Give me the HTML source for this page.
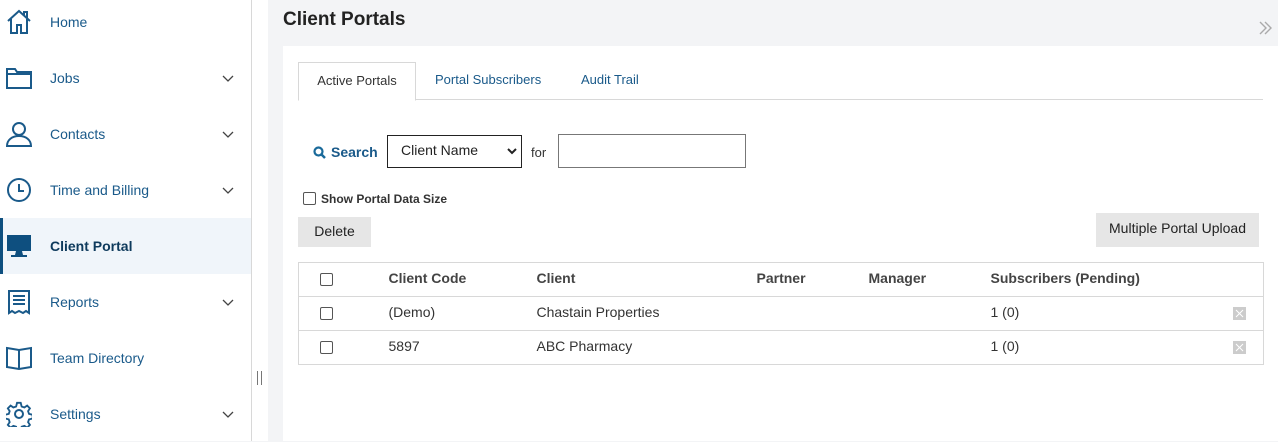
<!DOCTYPE html>
<html><head><style>
*{box-sizing:border-box;margin:0;padding:0}
body{width:1278px;height:441px;overflow:hidden;font-family:"Liberation Sans",sans-serif;font-size:13px;color:#222;background:#f3f4f6;position:relative}
.side{position:absolute;left:0;top:0;width:252px;height:441px;background:#fff;border-right:1px solid #d8d8d8}
.item{position:absolute;left:0;width:251px;height:56px;color:#1a5a8a;font-size:14px}
.item .lbl{position:absolute;left:50px;top:50%;transform:translateY(-50%)}
.item svg.ic{position:absolute;left:6px;top:50%;transform:translateY(-50%)}
.item .chev{position:absolute;left:222px;top:50%;margin-top:-3px}
.active{background:#f0f5fa;border-left:3px solid #0e4f7f}
.active .lbl{font-weight:bold;color:#0e3a5c}
.gap{position:absolute;left:252px;top:0;width:16px;height:441px;background:#fff}
.card{position:absolute;left:283px;top:46px;width:995px;height:395px;background:#fff}
h1{position:absolute;left:283px;top:9px;font-size:19px;font-weight:bold;color:#222}
.tabs{position:absolute;left:298px;top:62px;width:965px;height:38px;border-bottom:1px solid #d8d8d8}
.tab{position:absolute;top:0;height:38px;line-height:36px;font-size:13px;color:#1a5a8a}
.tab.on{left:0;width:118px;border:1px solid #d8d8d8;border-bottom:1px solid #fff;background:#fff;color:#333;text-align:center;height:39px}
.btn{position:absolute;background:#e6e6e6;color:#222;font-size:14px;text-align:center}
table{position:absolute;left:298px;top:262px;width:966px;border-collapse:collapse;border:1px solid #d8d8d8}
td{height:34px;border-top:1px solid #d8d8d8;font-size:14px;color:#333;padding:0;padding-bottom:3px}
tr.h td{font-weight:bold;color:#444}
.cb{display:inline-block;width:13px;height:13px;border:1px solid #555;border-radius:2px;vertical-align:middle}
.x{display:inline-block;width:13px;height:13px;background:#ccc;border:1px solid #bbb;vertical-align:middle}
</style></head><body>
<div class="side">
 <div class="item" style="top:-6px"><svg class="ic" width="26" height="26" viewBox="0 0 26 26" fill="none" stroke="#1a5a8a" stroke-width="2"><path d="M2 12 13 2 24 12M5 10v14h6v-8h4v8h6V10M18 6V3h3v6"/></svg><span class="lbl">Home</span></div>
 <div class="item" style="top:50px"><svg class="ic" width="26" height="26" viewBox="0 0 26 26" fill="none" stroke="#1a5a8a" stroke-width="2"><path d="M1 4h8l2 3h14v16H1zM1 9h24"/></svg><span class="lbl">Jobs</span><svg class="chev" width="12" height="8"><path d="M1 1l5 5 5-5" stroke="#444" fill="none" stroke-width="1.3"/></svg></div>
 <div class="item" style="top:106px"><svg class="ic" width="26" height="26" viewBox="0 0 26 26" fill="none" stroke="#1a5a8a" stroke-width="2"><circle cx="13" cy="8" r="6"/><path d="M1 25c0-6 5-10 12-10s12 4 12 10z"/></svg><span class="lbl">Contacts</span><svg class="chev" width="12" height="8"><path d="M1 1l5 5 5-5" stroke="#444" fill="none" stroke-width="1.3"/></svg></div>
 <div class="item" style="top:162px"><svg class="ic" width="26" height="26" viewBox="0 0 26 26" fill="none" stroke="#1a5a8a" stroke-width="2"><circle cx="13" cy="13" r="11"/><path d="M13 7v7h5"/></svg><span class="lbl">Time and Billing</span><svg class="chev" width="12" height="8"><path d="M1 1l5 5 5-5" stroke="#444" fill="none" stroke-width="1.3"/></svg></div>
 <div class="item active" style="top:218px"><svg class="ic" style="left:3px" width="26" height="26" viewBox="0 0 26 26"><rect x="1" y="2" width="24" height="16" fill="#0e4f7f"/><path d="M10 18h6l1 4h4v2H5v-2h4z" fill="#0e4f7f"/></svg><span class="lbl" style="left:47px">Client Portal</span></div>
 <div class="item" style="top:274px"><svg class="ic" width="26" height="26" viewBox="0 0 26 26" fill="none" stroke="#1a5a8a" stroke-width="2"><path d="M3 2h20v22l-3-2-3 2-4-2-4 2-3-2-3 2zM7 7h12M7 11h12M7 15h12"/></svg><span class="lbl">Reports</span><svg class="chev" width="12" height="8"><path d="M1 1l5 5 5-5" stroke="#444" fill="none" stroke-width="1.3"/></svg></div>
 <div class="item" style="top:330px"><svg class="ic" width="26" height="26" viewBox="0 0 26 26" fill="none" stroke="#1a5a8a" stroke-width="2"><path d="M1 3l12 2 12-2v19l-12 2-12-2zM13 5v19"/></svg><span class="lbl">Team Directory</span></div>
 <div class="item" style="top:386px"><svg class="ic" width="26" height="26" viewBox="0 0 26 26" fill="none" stroke="#1a5a8a" stroke-width="2"><circle cx="13" cy="13" r="4"/><path d="M11 1h4l1 4 3 1 3-2 3 3-2 3 1 3 4 1v4l-4 1-1 3 2 3-3 3-3-2-3 1-1 4h-4l-1-4-3-1-3 2-3-3 2-3-1-3-4-1v-4l4-1 1-3-2-3 3-3 3 2 3-1z" transform="scale(.92) translate(1 1)"/></svg><span class="lbl">Settings</span><svg class="chev" width="12" height="8"><path d="M1 1l5 5 5-5" stroke="#444" fill="none" stroke-width="1.3"/></svg></div>
</div>
<div class="gap"><div style="position:absolute;left:5px;top:371px;width:5px;height:14px;border-left:1px solid #777;border-right:1px solid #777"></div></div>
<h1>Client Portals</h1>
<svg style="position:absolute;left:1259px;top:21px" width="14" height="14"><path d="M1 1l6 6-6 6M6 1l6 6-6 6" stroke="#aaa" fill="none" stroke-width="1.4"/></svg>
<div class="card"></div>
<div class="tabs">
 <div class="tab on">Active Portals</div>
 <div class="tab" style="left:137px">Portal Subscribers</div>
 <div class="tab" style="left:283px">Audit Trail</div>
</div>
<svg style="position:absolute;left:313px;top:146px" width="13" height="13"><circle cx="5.5" cy="5.5" r="4" stroke="#1a6a9a" stroke-width="2.2" fill="none"/><path d="M8.5 8.5l3.5 3.5" stroke="#1a6a9a" stroke-width="2.5"/></svg>
<div style="position:absolute;left:331px;top:144px;font-size:14px;font-weight:bold;color:#1a5a8a">Search</div>
<div style="position:absolute;left:387px;top:135px;width:135px;height:33px;border:1px solid #222;font-size:14px;padding:6px 0 0 13px">Client Name<svg style="position:absolute;right:4px;top:12px" width="10" height="7"><path d="M1 1l4 4 4-4" stroke="#222" stroke-width="2" fill="none"/></svg></div>
<div style="position:absolute;left:531px;top:145px;color:#333">for</div>
<div style="position:absolute;left:558px;top:134px;width:188px;height:34px;border:1px solid #777"></div>
<span class="cb" style="position:absolute;left:303px;top:192px"></span>
<div style="position:absolute;left:321px;top:192px;font-size:12px;font-weight:bold;color:#333">Show Portal Data Size</div>
<div class="btn" style="left:298px;top:217px;width:73px;height:30px;line-height:28px">Delete</div>
<div class="btn" style="left:1096px;top:213px;width:163px;height:34px;line-height:31px">Multiple Portal Upload</div>
<table>
<tr class="h"><td style="width:90px;padding-left:21px;border-top:0"><span class="cb"></span></td><td style="width:148px;border-top:0">Client Code</td><td style="width:220px;border-top:0">Client</td><td style="width:112px;border-top:0">Partner</td><td style="width:122px;border-top:0">Manager</td><td style="border-top:0">Subscribers (Pending)</td><td style="width:40px;border-top:0"></td></tr>
<tr><td style="padding-left:21px"><span class="cb"></span></td><td>(Demo)</td><td>Chastain Properties</td><td></td><td></td><td>1 (0)</td><td style="text-align:right;padding-right:17px"><svg class="x" width="13" height="13" style="padding:0;border:0"><rect width="13" height="13" fill="#ccc"/><path d="M3 3l7 7M10 3l-7 7" stroke="#fff" stroke-width="1"/></svg></td></tr>
<tr><td style="padding-left:21px"><span class="cb"></span></td><td>5897</td><td>ABC Pharmacy</td><td></td><td></td><td>1 (0)</td><td style="text-align:right;padding-right:17px"><svg class="x" width="13" height="13" style="padding:0;border:0"><rect width="13" height="13" fill="#ccc"/><path d="M3 3l7 7M10 3l-7 7" stroke="#fff" stroke-width="1"/></svg></td></tr>
</table>
</body></html>
